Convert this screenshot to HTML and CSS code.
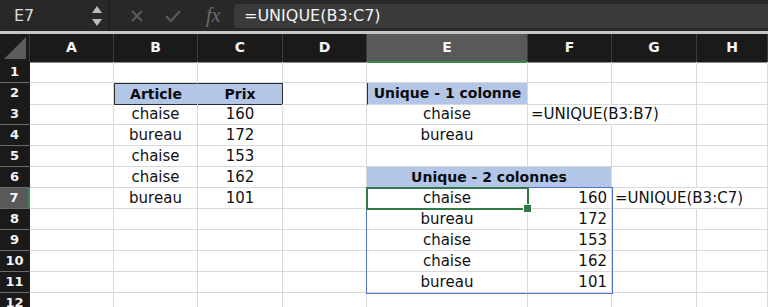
FILE: index.html
```
<!DOCTYPE html>
<html lang="fr">
<head>
  <meta charset="UTF-8" />
  <title>UNIQUE</title>
  <link rel="stylesheet" href="styles.css">
</head>
<body>
  <div class="formula-bar">
    <div class="name-box">
      <span>E7</span>
      <span class="spin">
        <svg width="12" height="22" viewBox="0 0 12 22"><path d="M6 1 L11 8 L1 8 Z" fill="#bdbdbd"/><path d="M1 14 L11 14 L6 21 Z" fill="#bdbdbd"/></svg>
      </span>
    </div>
    <div class="tools">
      <svg width="14" height="14" viewBox="0 0 14 14"><path d="M2 2 L12 12 M12 2 L2 12" stroke="#5a5a5a" stroke-width="2.2"/></svg>
      <svg width="18" height="14" viewBox="0 0 18 14"><path d="M2 7 L7 12 L16 2" stroke="#5a5a5a" stroke-width="2.2" fill="none"/></svg>
      <span class="fx">fx</span>
    </div>
    <div class="formula-input">=UNIQUE(B3:C7)</div>
  </div>
  <div class="divider"></div>

  <div class="sheet">
    <div class="row head">
      <div class="corner"><svg width="22" height="22" viewBox="0 0 22 22"><path d="M22 0 L22 22 L0 22 Z" fill="#5c5c5c"/></svg></div>
      <div>A</div><div>B</div><div>C</div><div>D</div><div class="active">E</div><div>F</div><div>G</div><div>H</div>
    </div>

    <div class="row"><div class="num">1</div><div></div><div></div><div></div><div></div><div></div><div></div><div></div><div></div></div>
    <div class="row"><div class="num">2</div><div></div><div class="title box-l">Article</div><div class="title box-r">Prix</div><div></div><div class="title edge">Unique - 1 colonne</div><div></div><div></div><div></div></div>
    <div class="row"><div class="num">3</div><div></div><div>chaise</div><div>160</div><div></div><div>chaise</div><div class="formula spill">=UNIQUE(B3:B7)</div><div></div><div></div></div>
    <div class="row"><div class="num">4</div><div></div><div>bureau</div><div>172</div><div></div><div>bureau</div><div></div><div></div><div></div></div>
    <div class="row"><div class="num">5</div><div></div><div>chaise</div><div>153</div><div></div><div></div><div></div><div></div><div></div></div>
    <div class="row"><div class="num">6</div><div></div><div>chaise</div><div>162</div><div></div><div class="title wide">Unique - 2 colonnes</div><div></div><div></div></div>
    <div class="row"><div class="num active">7</div><div></div><div>bureau</div><div>101</div><div></div><div>chaise</div><div class="value">160</div><div class="formula spill">=UNIQUE(B3:C7)</div><div></div></div>
    <div class="row"><div class="num">8</div><div></div><div></div><div></div><div></div><div>bureau</div><div class="value">172</div><div></div><div></div></div>
    <div class="row"><div class="num">9</div><div></div><div></div><div></div><div></div><div>chaise</div><div class="value">153</div><div></div><div></div></div>
    <div class="row"><div class="num">10</div><div></div><div></div><div></div><div></div><div>chaise</div><div class="value">162</div><div></div><div></div></div>
    <div class="row"><div class="num">11</div><div></div><div></div><div></div><div></div><div>bureau</div><div class="value">101</div><div></div><div></div></div>
    <div class="row"><div class="num">12</div><div></div><div></div><div></div><div></div><div></div><div></div><div></div><div></div></div>

    <div class="spill-range"></div>
    <div class="selection"><span class="handle"></span></div>
  </div>
</body>
</html>
```

FILE: styles.css
```
body {
  margin: 0;
  background: #fff;
  font-family: "DejaVu Sans", sans-serif;
  overflow: hidden;
}

/* formula bar */
.formula-bar {
  height: 31px;
  background: #282828;
  display: flex;
  align-items: center;
}

.name-box {
  width: 110px;
  height: 31px;
  display: flex;
  align-items: center;
  justify-content: space-between;
  padding: 0 6px 0 14px;
  box-sizing: border-box;
  border-right: 1px solid #1c1c1c;
  color: #dcdcdc;
  font-size: 16px;
}

.spin {
  display: flex;
}

.tools {
  width: 124px;
  display: flex;
  align-items: center;
  gap: 20px;
  padding-left: 20px;
  box-sizing: border-box;
}

.fx {
  font-family: "Liberation Serif", serif;
  font-style: italic;
  font-size: 20px;
  color: #6c6c6c;
  margin-left: 4px;
}

.formula-input {
  flex: 1;
  height: 24px;
  background: #3a3a3a;
  border-radius: 4px 0 0 4px;
  color: #f2f2f2;
  font-size: 16px;
  line-height: 24px;
  padding-left: 10px;
}

.divider {
  height: 3px;
  background: #c4c4c4;
}

/* grid */
.sheet {
  position: relative;
  --cols: 30px 84px 84px 85px 84px 161px 84px 85px 1fr;
}

.row {
  display: grid;
  grid-template-columns: var(--cols);
  height: 21px;
}

.row > div {
  box-sizing: border-box;
  border-right: 1px solid #d9d9d9;
  border-bottom: 1px solid #d9d9d9;
  font-size: 15px;
  line-height: 20px;
  color: #111;
  text-align: center;
  white-space: nowrap;
}

.row.head {
  height: 28px;
  background: #1a1a1a;
}

.row.head > div {
  border-right: 1px solid #3c3c3c;
  border-bottom: 1px solid #8a8a8a;
  color: #f4f4f4;
  font-weight: bold;
  font-size: 14px;
  line-height: 27px;
}

.row.head > .active {
  background: #595959;
  border-bottom: 2px solid #3a8a4f;
}

.corner {
  display: flex;
  align-items: flex-end;
  justify-content: flex-end;
  padding: 0 3px 3px 0;
}

.row > .num {
  background: #1a1a1a;
  border-right: 1px solid #1a1a1a;
  border-bottom: 1px solid #6a6a6a;
  color: #f4f4f4;
  font-weight: bold;
  font-size: 13px;
}

.row > .num.active {
  background: #595959;
  border-right: 2px solid #3a8a4f;
}

.row > .title {
  background: #b4c6e7;
  font-weight: bold;
  font-size: 14px;
  color: #0c0c0c;
}

.row > .box-l {
  border: 1px solid #2c2c2c;
  border-right-color: #b4c6e7;
}

.row > .box-r {
  border: 1px solid #2c2c2c;
  border-left: none;
}

.row > .edge {
  border-left: 1px solid #2c2c2c;
}

.row > .wide {
  grid-column: span 2;
}

.row > .formula {
  text-align: left;
  padding-left: 3px;
}

.row > .spill {
  border-right-color: transparent;
}

.row > .value {
  text-align: right;
  padding-right: 4px;
}

/* overlays */
.spill-range {
  position: absolute;
  left: 366px;
  top: 153px;
  width: 247px;
  height: 107px;
  box-sizing: border-box;
  border: 1px solid #4a74c9;
  pointer-events: none;
}

.selection {
  position: absolute;
  left: 366px;
  top: 153px;
  width: 163px;
  height: 23px;
  box-sizing: border-box;
  border: 2px solid #2f7a46;
  pointer-events: none;
}

.handle {
  position: absolute;
  right: -5px;
  bottom: -5px;
  width: 7px;
  height: 7px;
  background: #2f7a46;
  border: 1px solid #fff;
}
```
